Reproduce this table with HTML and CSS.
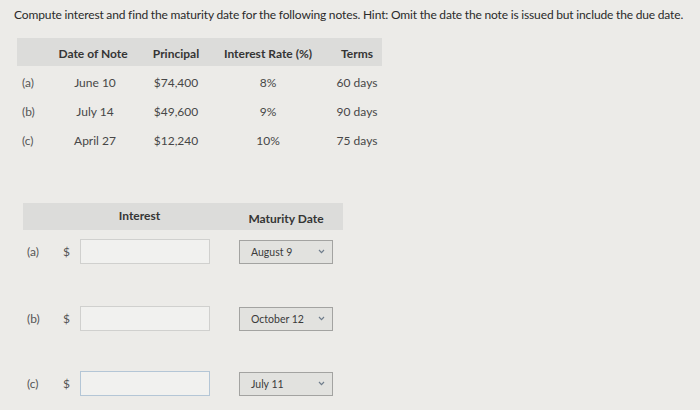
FILE: index.html
```html
<!DOCTYPE html>
<html>
<head>
<meta charset="utf-8">
<link rel="stylesheet" href="styles.css">
</head>
<body>
<p class="prompt">Compute interest and find the maturity date for the following notes. Hint: Omit the date the note is issued but include the due date.</p>

<div class="notes">
  <div class="notes-head">
    <span></span>
    <span>Date of Note</span>
    <span>Principal</span>
    <span>Interest Rate (%)</span>
    <span class="terms">Terms</span>
  </div>
  <div class="notes-row">
    <span class="lbl">(a)</span>
    <span>June 10</span>
    <span>$74,400</span>
    <span>8%</span>
    <span class="terms">60 days</span>
  </div>
  <div class="notes-row">
    <span class="lbl">(b)</span>
    <span>July 14</span>
    <span>$49,600</span>
    <span>9%</span>
    <span class="terms">90 days</span>
  </div>
  <div class="notes-row">
    <span class="lbl">(c)</span>
    <span>April 27</span>
    <span>$12,240</span>
    <span>10%</span>
    <span class="terms">75 days</span>
  </div>
</div>

<div class="answers">
  <div class="ans-head">
    <span></span>
    <span class="h-int">Interest</span>
    <span></span>
    <span class="h-mat">Maturity Date</span>
  </div>
  <div class="ans-row">
    <span class="lbl">(a)</span>
    <span class="dollar">$</span>
    <span class="field"></span>
    <span></span>
    <span class="select">August 9<svg class="chev" viewBox="0 0 8 6" width="7" height="5"><path d="M1 1.2 L4 4.4 L7 1.2" fill="none" stroke="#6f7d8c" stroke-width="1.4"/></svg></span>
  </div>
  <div class="ans-row">
    <span class="lbl">(b)</span>
    <span class="dollar">$</span>
    <span class="field"></span>
    <span></span>
    <span class="select">October 12<svg class="chev" viewBox="0 0 8 6" width="7" height="5"><path d="M1 1.2 L4 4.4 L7 1.2" fill="none" stroke="#6f7d8c" stroke-width="1.4"/></svg></span>
  </div>
  <div class="ans-row last">
    <span class="lbl">(c)</span>
    <span class="dollar">$</span>
    <span class="field focus"></span>
    <span></span>
    <span class="select">July 11<svg class="chev" viewBox="0 0 8 6" width="7" height="5"><path d="M1 1.2 L4 4.4 L7 1.2" fill="none" stroke="#6f7d8c" stroke-width="1.4"/></svg></span>
  </div>
</div>
</body>
</html>
```

FILE: styles.css
```css
html, body {
  margin: 0;
  padding: 0;
  background: #ecebe8;
}
body {
  font-family: Lato, "Open Sans", sans-serif;
  color: #3a3a3a;
  width: 700px;
  height: 410px;
  overflow: hidden;
}
.prompt {
  margin: 0;
  padding: 7px 0 0 14px;
  font-size: 12px;
  letter-spacing: -0.11px;
  word-spacing: -0.3px;
  line-height: 15px;
  color: #2a2a2a;
  white-space: nowrap;
}
.notes {
  margin: 16px 0 0 17px;
  width: 365px;
}
.notes-head,
.notes-row {
  display: grid;
  grid-template-columns: 36px 80px 86px 98px 65px;
  align-items: center;
  text-align: center;
  font-size: 12px;
}
.notes-head {
  background: #dcdcda;
  height: 28px;
  font-weight: 700;
  color: #353535;
  padding-top: 2px;
  box-sizing: border-box;
}
.notes-row {
  height: 29px;
  color: #474747;
}
.notes-head + .notes-row { margin-top: 2px; }
.notes-row span:nth-child(2) { padding-left: 4px; }
.terms { padding-left: 15px; }
.lbl {
  text-align: left;
  padding-left: 5px;
  font-size: 12px;
  color: #555;
}
.notes-row .lbl { padding-left: 5px; }
.answers {
  margin: 48px 0 0 23px;
  width: 320px;
}
.ans-head,
.ans-row {
  display: grid;
  grid-template-columns: 40px 17px 130px 29px 94px;
  align-items: center;
}
.ans-head {
  background: #dcdcda;
  height: 27px;
  font-size: 12px;
  font-weight: 700;
  color: #353535;
  padding-top: 4px;
  box-sizing: border-box;
}
.h-int {
  grid-column: 2 / 4;
  text-align: center;
  padding-left: 6px;
  margin-top: -6px;
}
.h-mat {
  text-align: center;
}
.ans-row {
  height: 25px;
  margin-top: 9px;
}
.ans-row + .ans-row { margin-top: 42px; }
.ans-row.last { margin-top: 40px; }
.ans-row .lbl { padding-left: 4px; }
.dollar {
  font-size: 12px;
  color: #555;
}
.field {
  height: 25px;
  box-sizing: border-box;
  border: 1px solid #d0d0ce;
  background: #f1f1ef;
}
.field.focus {
  border: 1.5px solid #b4c6d6;
}
.select {
  height: 24px;
  box-sizing: border-box;
  border: 1px solid #a3a3a1;
  background: #e2e2df;
  font-size: 10.5px;
  color: #3a3a3a;
  display: flex;
  align-items: center;
  justify-content: space-between;
  padding: 0 7px 0 11px;
}
.chev { display: block; }
```
